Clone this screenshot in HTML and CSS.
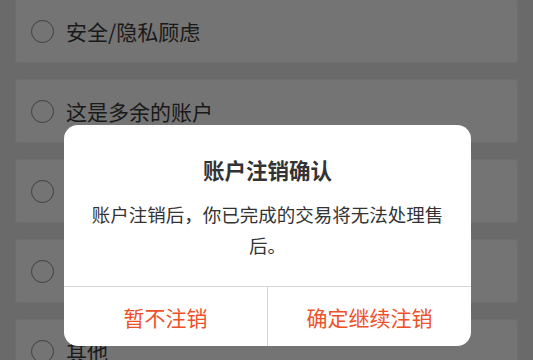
FILE: index.html
```html
<!DOCTYPE html>
<html lang="zh-CN">
<head>
<meta charset="utf-8">
<title>账户注销</title>
<link rel="stylesheet" href="styles.css">
</head>
<body>
<div class="page">
  <ul class="reasons">
    <li class="reason"><span class="radio"></span><span class="label">安全/隐私顾虑</span></li>
    <li class="reason"><span class="radio"></span><span class="label">这是多余的账户</span></li>
    <li class="reason"><span class="radio"></span><span class="label">无法解绑手机号</span></li>
    <li class="reason"><span class="radio"></span><span class="label">不想再使用了</span></li>
    <li class="reason"><span class="radio"></span><span class="label">其他</span></li>
  </ul>
</div>
<div class="overlay"></div>
<div class="dialog">
  <div class="dialog-body">
    <h2 class="dialog-title">账户注销确认</h2>
    <p class="dialog-text">账户注销后，你已完成的交易将无法处理售后。</p>
  </div>
  <div class="dialog-actions">
    <button class="btn">暂不注销</button>
    <button class="btn btn-right">确定继续注销</button>
  </div>
</div>
</body>
</html>
```
FILE: styles.css
```css
* { box-sizing: border-box; }
html, body {
  margin: 0;
  padding: 0;
  width: 533px;
  height: 360px;
  overflow: hidden;
}
body {
  background: #e6e6e6;
  font-family: "Noto Sans CJK SC", "Noto Sans", sans-serif;
  position: relative;
}
.page {
  padding: 0 15px;
}
.reasons {
  list-style: none;
  margin: -1px 0 0;
  padding: 0;
  display: flex;
  flex-direction: column;
  gap: 16px;
}
.reason {
  height: 64px;
  background: #fcfcfc;
  border: 1px solid #efefef;
  border-radius: 3px;
  display: flex;
  align-items: center;
  padding-left: 15px;
}
.radio {
  width: 23px;
  height: 23px;
  border: 1px solid #8a8a8a;
  border-radius: 50%;
  flex: none;
}
.label {
  margin-left: 12px;
  font-size: 21px;
  color: #3a3a3a;
  line-height: 1;
}
.overlay {
  position: absolute;
  inset: 0;
  background: rgba(0, 0, 0, 0.54);
}
.dialog {
  position: absolute;
  left: 64px;
  top: 125px;
  width: 407px;
  height: 221px;
  background: #fff;
  border-radius: 14px;
  overflow: hidden;
  display: flex;
  flex-direction: column;
}
.dialog-body {
  padding: 30px 24px 0;
  height: 162px;
  border-bottom: 1px solid #d6d6d6;
  text-align: center;
}
.dialog-title {
  margin: 0;
  font-size: 21.5px;
  line-height: 30px;
  font-weight: 700;
  color: #333;
}
.dialog-text {
  margin: 14px 0 0;
  font-size: 18.5px;
  line-height: 31px;
  color: #333;
}
.dialog-actions {
  flex: 1;
  display: flex;
}
.btn {
  flex: 1;
  border: none;
  background: transparent;
  font-family: inherit;
  font-size: 21px;
  color: #ee5027;
  padding: 0;
  margin: 0;
}
.btn-right {
  border-left: 1px solid #d6d6d6;
}
```
